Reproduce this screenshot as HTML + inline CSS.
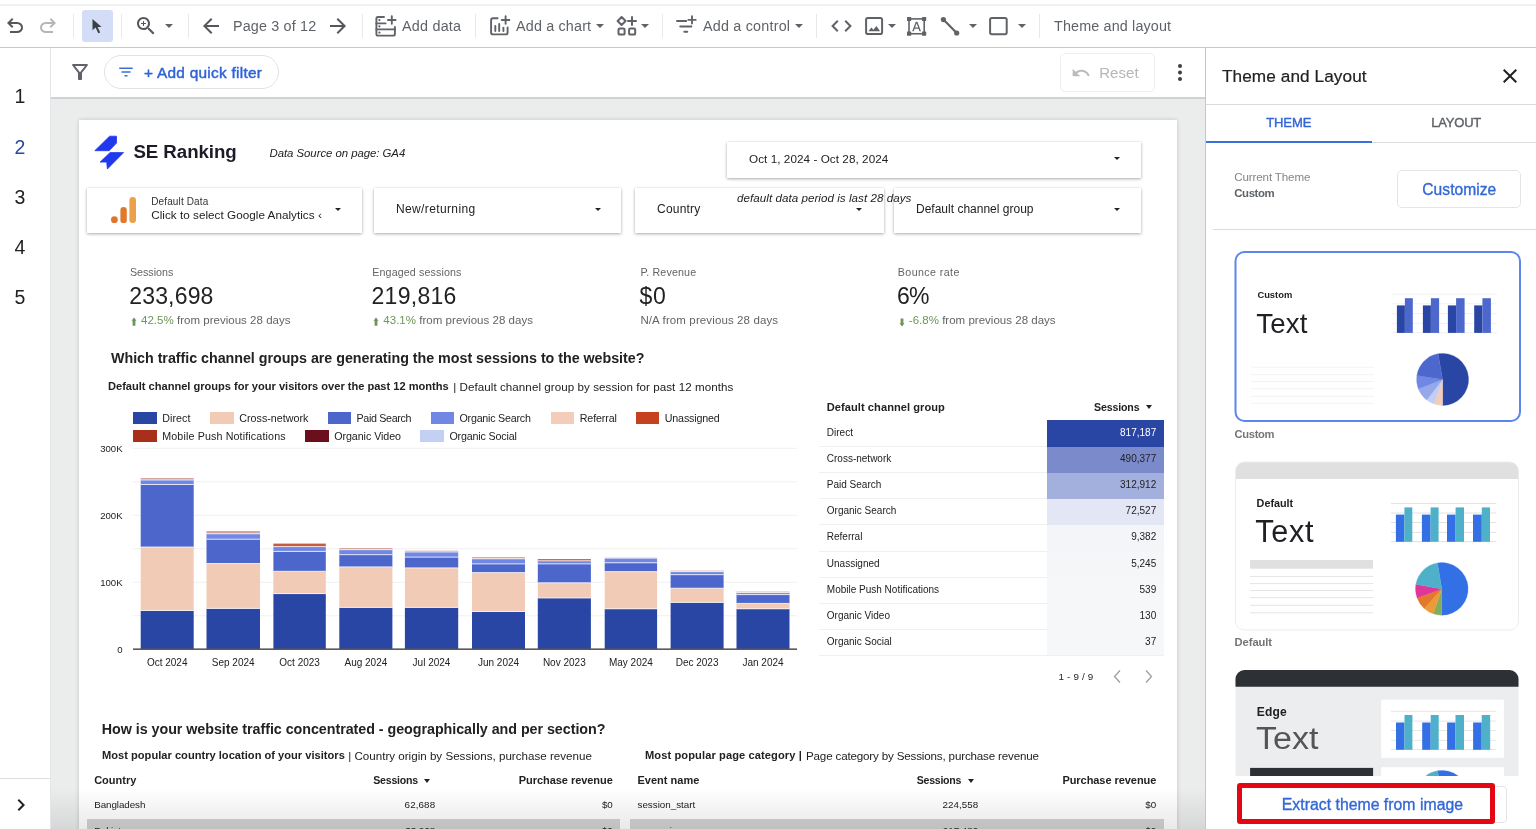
<!DOCTYPE html>
<html>
<head>
<meta charset="utf-8">
<title>Report</title>
<style>
html,body{margin:0;padding:0;}
body{width:1536px;height:829px;overflow:hidden;background:#fff;position:relative;font-family:"Liberation Sans",sans-serif;color:#202124;}
.abs{position:absolute;}
#pg,#tbc,#pnc,#fbc,#sidec{will-change:transform;}
.t{position:absolute;white-space:nowrap;line-height:1;}
/* toolbar */
#topline{left:0;top:4px;width:1536px;height:2px;background:#f0f2f1;}
#toolbar{left:0;top:6px;width:1536px;height:41px;background:#fff;border-bottom:1px solid #c6c9ce;}
.sep{position:absolute;top:14px;width:1px;height:24px;background:#e6e8eb;}
.tb{position:absolute;white-space:nowrap;line-height:1;font-size:14.5px;color:#5f6368;top:19px;}
.caret{position:absolute;width:0;height:0;border-left:4.2px solid transparent;border-right:4.2px solid transparent;border-top:4.4px solid #5f6368;}
/* sidebar */
#side{left:0;top:48px;width:50px;height:781px;background:#fff;border-right:1px solid #e3e5e8;}
.num{position:absolute;left:0;width:40px;text-align:center;font-size:19.5px;line-height:1;color:#202124;}
/* filter bar */
#fbar{left:51px;top:48px;width:1154px;height:49px;background:#fff;border-bottom:2px solid #cfd1d4;}
/* canvas */
#canvas{left:51px;top:99px;width:1154px;height:730px;background:#ebecec;overflow:hidden;}
#page{left:28px;top:21px;width:1098px;height:720px;background:#fff;box-shadow:0 0 4px rgba(0,0,0,.18);}
/* report text (page-relative coords handled by #pg wrapper using body coords) */
#pg{left:0;top:0;width:1205px;height:829px;overflow:hidden;pointer-events:none;}
.r{position:absolute;white-space:nowrap;line-height:1;color:#2b2b2b;}
.ctl{position:absolute;background:#fff;box-shadow:0 1px 3px rgba(0,0,0,.32),0 0 1px rgba(0,0,0,.12);}
.cc{position:absolute;width:0;height:0;border-left:3.5px solid transparent;border-right:3.5px solid transparent;border-top:3.5px solid #222;}
/* right panel */
#panel{left:1205px;top:48px;width:330px;height:781px;background:#fff;border-left:1px solid #c3c6cb;overflow:hidden;}
</style>
</head>
<body>
<div id="topline" class="abs"></div>
<div id="toolbar" class="abs"></div>
<div id="side" class="abs"></div>
<div id="fbar" class="abs"></div>
<div id="canvas" class="abs"><div id="page" class="abs"></div></div>
<div id="fbc" class="abs" style="left:0;top:0;width:1205px;height:98px;">
<svg class="abs" style="left:68px;top:60px" width="24" height="24" viewBox="0 0 24 24"><path fill="#5f6368" d="M7 6h10l-5.01 6.3L7 6zm-2.75-.39C6.27 8.2 10 13 10 13v6c0 .55.45 1 1 1h2c.55 0 1-.45 1-1v-6s3.72-4.8 5.74-7.39c.51-.66.04-1.61-.79-1.61H5.04c-.83 0-1.3.95-.79 1.61z"/></svg>
<div class="abs" style="left:104px;top:55px;width:173px;height:32px;border:1px solid #e0e2e6;border-radius:17px;"></div>
<svg class="abs" style="left:117px;top:63px" width="18" height="18" viewBox="0 0 24 24"><path fill="#3b6fe0" d="M10 18h4v-2h-4v2zM3 6v2h18V6H3zm3 7h12v-2H6v2z"/></svg>
<div class="t" id="t_aqf" style="left:144px;top:65.0px;font-size:15.4px;letter-spacing:0.271px;color:#2f63d8;-webkit-text-stroke:0.45px #2f63d8;">+ Add quick filter</div>
<div class="abs" style="left:1060px;top:53px;width:93px;height:37px;border:1px solid #eceef0;border-radius:5px;"></div>
<svg class="abs" style="left:1071px;top:63px" width="20" height="20" viewBox="0 0 24 24"><path fill="#b9bbbe" d="M12.5 8c-2.65 0-5.05.99-6.9 2.6L2 7v9h9l-3.62-3.62c1.39-1.16 3.16-1.88 5.12-1.88 3.54 0 6.55 2.31 7.6 5.5l2.37-.78C21.08 11.03 17.15 8 12.5 8z"/></svg>
<div class="t" id="t_reset" style="left:1099.2px;top:64.7px;font-size:15px;letter-spacing:0.043px;color:#b4b6b9;">Reset</div>
<svg class="abs" style="left:1168px;top:60px" width="24" height="24" viewBox="0 0 24 24"><g fill="#3c4043"><circle cx="12" cy="6" r="2"/><circle cx="12" cy="12.5" r="2"/><circle cx="12" cy="19" r="2"/></g></svg>
</div>
<div id="sidec" class="abs" style="left:0;top:0;width:50px;height:829px;">
<div class="num" id="n1" style="top:87px">1</div>
<div class="num" id="n2" style="top:137.6px;color:#2b46a8">2</div>
<div class="num" id="n3" style="top:187.6px">3</div>
<div class="num" id="n4" style="top:237.6px">4</div>
<div class="num" id="n5" style="top:287.6px">5</div>
<div class="abs" style="left:0;top:778px;width:50px;height:1px;background:#dcdee1"></div>
<svg class="abs" style="left:9px;top:793px" width="24" height="24" viewBox="0 0 24 24"><path fill="#202124" d="M10 6L8.59 7.41 13.17 12l-4.58 4.59L10 18l6-6z"/></svg>
</div>
<div id="pg" class="abs">
<svg class="abs" style="left:93px;top:135px" width="33" height="36" viewBox="0 0 33 36"><g fill="#2139ee" stroke="#2139ee" stroke-width="0.8" stroke-linejoin="round"><path d="M16.6,1.2 L23.5,1.2 L23.5,8.1 L16.2,15.7 L1.8,15.7 Z"/><path d="M17.1,17.6 L30.6,17.6 L14.4,34 L13.7,27.1 L7.1,27.1 Z"/></g></svg>
<div class="r" id="l_name" style="left:133.4px;top:143.2px;font-size:18.7px;font-weight:bold;color:#1c1c28;letter-spacing:-0.051px;">SE Ranking</div>
<div class="r" id="l_ds" style="left:269.5px;top:148.1px;font-size:11.4px;font-style:italic;color:#222;letter-spacing:-0.045px;">Data Source on page: GA4</div>
<div class="ctl" style="left:727px;top:142px;width:414px;height:36px"></div>
<div class="r" id="d_range" style="left:749px;top:152.7px;font-size:11.7px;color:#222;letter-spacing:0.062px;">Oct 1, 2024 - Oct 28, 2024</div>
<div class="cc" style="left:1114px;top:157px"></div>
<div class="ctl" style="left:87px;top:188px;width:275px;height:45px"></div>
<div class="ctl" style="left:374px;top:188px;width:247px;height:45px"></div>
<div class="ctl" style="left:635px;top:188px;width:249px;height:45px"></div>
<div class="ctl" style="left:894px;top:188px;width:247px;height:45px"></div>
<div class="r" id="d_note" style="left:737px;top:191.8px;font-size:11.6px;font-style:italic;color:#222;letter-spacing:0.048px;">default data period is last 28 days</div>
<svg class="abs" style="left:110px;top:196px" width="27" height="28" viewBox="110 196 27 28"><circle cx="114.4" cy="219.7" r="3.4" fill="#e0752a"/><rect x="120.4" y="206.9" width="6.4" height="16.2" rx="3.2" fill="#e0792c"/><rect x="129.4" y="196.9" width="6.6" height="26.2" rx="3.3" fill="#eca04a"/></svg>
<div class="r" id="c_dd" style="left:151.2px;top:197.1px;font-size:10px;color:#333;letter-spacing:0.134px;">Default Data</div>
<div class="r" id="c_click" style="left:151.2px;top:209.2px;font-size:11.7px;color:#222;letter-spacing:0.032px;">Click to select Google Analytics &#8249;</div>
<div class="cc" style="left:335px;top:208px"></div>
<div class="r" id="c_new" style="left:396px;top:203.1px;font-size:12px;color:#222;letter-spacing:0.369px;">New/returning</div>
<div class="cc" style="left:595px;top:208px"></div>
<div class="r" id="c_country" style="left:657px;top:203.1px;font-size:12px;color:#222;letter-spacing:0.212px;">Country</div>
<div class="cc" style="left:856px;top:208px"></div>
<div class="r" id="c_dcg" style="left:916px;top:203.1px;font-size:12px;color:#222;letter-spacing:0.004px;">Default channel group</div>
<div class="cc" style="left:1114px;top:208px"></div>
<div class="r" id="s0_l" style="left:130px;top:266.8px;font-size:10.7px;color:#646464;letter-spacing:-0.015px;">Sessions</div>
<div class="r" id="s0_v" style="left:129.2px;top:285.0px;font-size:23px;color:#222;letter-spacing:0.180px;">233,698</div>
<svg class="abs" style="left:131px;top:317.3px" width="6" height="9" viewBox="0 0 6 9"><path d="M3,0.6 L5.5,3.8 L4.4,3.8 L4.4,8.7 L1.6,8.7 L1.6,3.8 L0.5,3.8 Z" fill="#6b9657"/></svg>
<div class="r" id="s0_d" style="left:141px;top:314.8px;font-size:11.5px;color:#646464;letter-spacing:0.021px;"><span style="color:#6b9657">42.5%</span> from previous 28 days</div>
<div class="r" id="s1_l" style="left:372.3px;top:266.8px;font-size:10.7px;color:#646464;letter-spacing:0.116px;">Engaged sessions</div>
<div class="r" id="s1_v" style="left:371.5px;top:285.0px;font-size:23px;color:#222;letter-spacing:0.280px;">219,816</div>
<svg class="abs" style="left:373.3px;top:317.3px" width="6" height="9" viewBox="0 0 6 9"><path d="M3,0.6 L5.5,3.8 L4.4,3.8 L4.4,8.7 L1.6,8.7 L1.6,3.8 L0.5,3.8 Z" fill="#6b9657"/></svg>
<div class="r" id="s1_d" style="left:383.3px;top:314.8px;font-size:11.5px;color:#646464;letter-spacing:0.028px;"><span style="color:#6b9657">43.1%</span> from previous 28 days</div>
<div class="r" id="s2_l" style="left:640.4px;top:266.8px;font-size:10.7px;color:#646464;letter-spacing:0.136px;">P. Revenue</div>
<div class="r" id="s2_v" style="left:639.6px;top:285.0px;font-size:23px;color:#222;letter-spacing:0.558px;">$0</div>
<div class="r" id="s2_d" style="left:640.4px;top:314.8px;font-size:11.5px;color:#646464;letter-spacing:0.117px;">N/A from previous 28 days</div>
<div class="r" id="s3_l" style="left:897.8px;top:266.8px;font-size:10.7px;color:#646464;letter-spacing:0.400px;">Bounce rate</div>
<div class="r" id="s3_v" style="left:897.0px;top:285.0px;font-size:23px;color:#222;letter-spacing:-0.721px;">6%</div>
<svg class="abs" style="left:898.8px;top:317.5px" width="6" height="9" viewBox="0 0 6 9"><path d="M3,8.5 L5.5,5.3 L4.4,5.3 L4.4,0.4 L1.6,0.4 L1.6,5.3 L0.5,5.3 Z" fill="#6b9657"/></svg>
<div class="r" id="s3_d" style="left:908.8px;top:314.8px;font-size:11.5px;color:#646464;letter-spacing:0.016px;"><span style="color:#6b9657">-6.8%</span> from previous 28 days</div>
<div class="r" id="h1" style="left:111px;top:351.2px;font-size:14.3px;font-weight:bold;color:#222;letter-spacing:-0.037px;">Which traffic channel groups are generating the most sessions to the website?</div>
<div class="r" id="h1s" style="left:108px;top:381.3px;font-size:11.1px;font-weight:bold;color:#222;letter-spacing:-0.014px;">Default channel groups for your visitors over the past 12 months</div>
<div class="r" id="h1s2" style="left:453.2px;top:381.1px;font-size:11.6px;color:#222;letter-spacing:0.061px;">| Default channel group by session for past 12 months</div>
<div class="abs" style="left:133.2px;top:412.3px;width:23.7px;height:11.8px;background:#2a46a4"></div>
<div class="r" id="lg0" style="left:162.2px;top:413.3px;font-size:10.7px;color:#222;letter-spacing:0.076px;">Direct</div>
<div class="abs" style="left:210.3px;top:412.3px;width:23.7px;height:11.8px;background:#f1cbb5"></div>
<div class="r" id="lg1" style="left:239.3px;top:413.3px;font-size:10.7px;color:#222;letter-spacing:0.018px;">Cross-network</div>
<div class="abs" style="left:327.5px;top:412.3px;width:23.7px;height:11.8px;background:#4c66cb"></div>
<div class="r" id="lg2" style="left:356.5px;top:413.3px;font-size:10.7px;color:#222;letter-spacing:-0.318px;">Paid Search</div>
<div class="abs" style="left:430.5px;top:412.3px;width:23.7px;height:11.8px;background:#7088e4"></div>
<div class="r" id="lg3" style="left:459.5px;top:413.3px;font-size:10.7px;color:#222;letter-spacing:-0.225px;">Organic Search</div>
<div class="abs" style="left:550.7px;top:412.3px;width:23.7px;height:11.8px;background:#f3cdb9"></div>
<div class="r" id="lg4" style="left:579.7px;top:413.3px;font-size:10.7px;color:#222;letter-spacing:-0.107px;">Referral</div>
<div class="abs" style="left:635.8px;top:412.3px;width:23.7px;height:11.8px;background:#c5411f"></div>
<div class="r" id="lg5" style="left:664.8px;top:413.3px;font-size:10.7px;color:#222;letter-spacing:-0.171px;">Unassigned</div>
<div class="abs" style="left:133.2px;top:430.2px;width:23.7px;height:11.8px;background:#a8301a"></div>
<div class="r" id="lg6" style="left:162.2px;top:431.2px;font-size:10.7px;color:#222;letter-spacing:0.142px;">Mobile Push Notifications</div>
<div class="abs" style="left:305.2px;top:430.2px;width:23.7px;height:11.8px;background:#6b0f1c"></div>
<div class="r" id="lg7" style="left:334.2px;top:431.2px;font-size:10.7px;color:#222;letter-spacing:-0.055px;">Organic Video</div>
<div class="abs" style="left:420.4px;top:430.2px;width:23.7px;height:11.8px;background:#c3cff3"></div>
<div class="r" id="lg8" style="left:449.4px;top:431.2px;font-size:10.7px;color:#222;letter-spacing:-0.149px;">Organic Social</div>
<svg class="abs" style="left:90px;top:440px" width="720" height="215" viewBox="90 440 720 215"><rect x="133" y="447.8" width="664" height="1" fill="#f0f0f0"/><rect x="133" y="481.3" width="664" height="1" fill="#f0f0f0"/><rect x="133" y="514.8" width="664" height="1" fill="#f0f0f0"/><rect x="133" y="548.3" width="664" height="1" fill="#f0f0f0"/><rect x="133" y="581.8" width="664" height="1" fill="#f0f0f0"/><rect x="133" y="615.3" width="664" height="1" fill="#f0f0f0"/><rect x="140.7" y="610.5" width="53.0" height="38.3" fill="#2a46a4"/><rect x="140.7" y="547.0" width="53.0" height="63.5" fill="#f1cbb5"/><rect x="140.7" y="610.0" width="53.0" height="1" fill="#fff" fill-opacity="0.75"/><rect x="140.7" y="484.5" width="53.0" height="62.5" fill="#4c66cb"/><rect x="140.7" y="546.5" width="53.0" height="1" fill="#fff" fill-opacity="0.75"/><rect x="140.7" y="480.0" width="53.0" height="4.5" fill="#7088e4"/><rect x="140.7" y="484.0" width="53.0" height="1" fill="#fff" fill-opacity="0.75"/><rect x="140.7" y="478.0" width="53.0" height="2.0" fill="#d6a59c"/><rect x="140.7" y="479.5" width="53.0" height="1" fill="#fff" fill-opacity="0.75"/><rect x="206.5" y="608.4" width="53.5" height="40.4" fill="#2a46a4"/><rect x="206.5" y="563.5" width="53.5" height="44.9" fill="#f1cbb5"/><rect x="206.5" y="607.9" width="53.5" height="1" fill="#fff" fill-opacity="0.75"/><rect x="206.5" y="539.2" width="53.5" height="24.3" fill="#4c66cb"/><rect x="206.5" y="563.0" width="53.5" height="1" fill="#fff" fill-opacity="0.75"/><rect x="206.5" y="533.8" width="53.5" height="5.4" fill="#7088e4"/><rect x="206.5" y="538.7" width="53.5" height="1" fill="#fff" fill-opacity="0.75"/><rect x="206.5" y="531.0" width="53.5" height="2.8" fill="#d6a59c"/><rect x="206.5" y="533.3" width="53.5" height="1" fill="#fff" fill-opacity="0.75"/><rect x="273.4" y="593.6" width="52.4" height="55.2" fill="#2a46a4"/><rect x="273.4" y="571.3" width="52.4" height="22.3" fill="#f1cbb5"/><rect x="273.4" y="593.1" width="52.4" height="1" fill="#fff" fill-opacity="0.75"/><rect x="273.4" y="551.4" width="52.4" height="19.9" fill="#4c66cb"/><rect x="273.4" y="570.8" width="52.4" height="1" fill="#fff" fill-opacity="0.75"/><rect x="273.4" y="546.6" width="52.4" height="4.8" fill="#7088e4"/><rect x="273.4" y="550.9" width="52.4" height="1" fill="#fff" fill-opacity="0.75"/><rect x="273.4" y="543.6" width="52.4" height="3.0" fill="#c75a42"/><rect x="273.4" y="546.1" width="52.4" height="1" fill="#fff" fill-opacity="0.75"/><rect x="339.3" y="607.4" width="53.1" height="41.4" fill="#2a46a4"/><rect x="339.3" y="566.9" width="53.1" height="40.5" fill="#f1cbb5"/><rect x="339.3" y="606.9" width="53.1" height="1" fill="#fff" fill-opacity="0.75"/><rect x="339.3" y="554.7" width="53.1" height="12.2" fill="#4c66cb"/><rect x="339.3" y="566.4" width="53.1" height="1" fill="#fff" fill-opacity="0.75"/><rect x="339.3" y="549.7" width="53.1" height="5.0" fill="#7088e4"/><rect x="339.3" y="554.2" width="53.1" height="1" fill="#fff" fill-opacity="0.75"/><rect x="339.3" y="548.0" width="53.1" height="1.7" fill="#d6a59c"/><rect x="339.3" y="549.2" width="53.1" height="1" fill="#fff" fill-opacity="0.75"/><rect x="404.9" y="607.4" width="53.3" height="41.4" fill="#2a46a4"/><rect x="404.9" y="567.9" width="53.3" height="39.5" fill="#f1cbb5"/><rect x="404.9" y="606.9" width="53.3" height="1" fill="#fff" fill-opacity="0.75"/><rect x="404.9" y="557.1" width="53.3" height="10.8" fill="#4c66cb"/><rect x="404.9" y="567.4" width="53.3" height="1" fill="#fff" fill-opacity="0.75"/><rect x="404.9" y="552.0" width="53.3" height="5.1" fill="#7088e4"/><rect x="404.9" y="556.6" width="53.3" height="1" fill="#fff" fill-opacity="0.75"/><rect x="404.9" y="550.7" width="53.3" height="1.3" fill="#d6a59c"/><rect x="404.9" y="551.5" width="53.3" height="1" fill="#fff" fill-opacity="0.75"/><rect x="472" y="611.5" width="53.0" height="37.3" fill="#2a46a4"/><rect x="472" y="572.6" width="53.0" height="38.9" fill="#f1cbb5"/><rect x="472" y="611.0" width="53.0" height="1" fill="#fff" fill-opacity="0.75"/><rect x="472" y="563.9" width="53.0" height="8.7" fill="#4c66cb"/><rect x="472" y="572.1" width="53.0" height="1" fill="#fff" fill-opacity="0.75"/><rect x="472" y="558.8" width="53.0" height="5.1" fill="#7088e4"/><rect x="472" y="563.4" width="53.0" height="1" fill="#fff" fill-opacity="0.75"/><rect x="472" y="557.1" width="53.0" height="1.7" fill="#d6a59c"/><rect x="472" y="558.3" width="53.0" height="1" fill="#fff" fill-opacity="0.75"/><rect x="537.8" y="598.0" width="53.1" height="50.8" fill="#2a46a4"/><rect x="537.8" y="582.8" width="53.1" height="15.2" fill="#f1cbb5"/><rect x="537.8" y="597.5" width="53.1" height="1" fill="#fff" fill-opacity="0.75"/><rect x="537.8" y="563.9" width="53.1" height="18.9" fill="#4c66cb"/><rect x="537.8" y="582.3" width="53.1" height="1" fill="#fff" fill-opacity="0.75"/><rect x="537.8" y="560.8" width="53.1" height="3.1" fill="#7088e4"/><rect x="537.8" y="563.4" width="53.1" height="1" fill="#fff" fill-opacity="0.75"/><rect x="537.8" y="559.1" width="53.1" height="1.7" fill="#c75a42"/><rect x="537.8" y="560.3" width="53.1" height="1" fill="#fff" fill-opacity="0.75"/><rect x="604.7" y="608.8" width="52.4" height="40.0" fill="#2a46a4"/><rect x="604.7" y="571.6" width="52.4" height="37.2" fill="#f1cbb5"/><rect x="604.7" y="608.3" width="52.4" height="1" fill="#fff" fill-opacity="0.75"/><rect x="604.7" y="562.8" width="52.4" height="8.8" fill="#4c66cb"/><rect x="604.7" y="571.1" width="52.4" height="1" fill="#fff" fill-opacity="0.75"/><rect x="604.7" y="558.1" width="52.4" height="4.7" fill="#7088e4"/><rect x="604.7" y="562.3" width="52.4" height="1" fill="#fff" fill-opacity="0.75"/><rect x="604.7" y="557.6" width="52.4" height="0.5" fill="#d6a59c"/><rect x="604.7" y="557.6" width="52.4" height="1" fill="#fff" fill-opacity="0.75"/><rect x="670.6" y="602.4" width="53.0" height="46.4" fill="#2a46a4"/><rect x="670.6" y="588.2" width="53.0" height="14.2" fill="#f1cbb5"/><rect x="670.6" y="601.9" width="53.0" height="1" fill="#fff" fill-opacity="0.75"/><rect x="670.6" y="574.7" width="53.0" height="13.5" fill="#4c66cb"/><rect x="670.6" y="587.7" width="53.0" height="1" fill="#fff" fill-opacity="0.75"/><rect x="670.6" y="571.6" width="53.0" height="3.1" fill="#7088e4"/><rect x="670.6" y="574.2" width="53.0" height="1" fill="#fff" fill-opacity="0.75"/><rect x="670.6" y="570.6" width="53.0" height="1.0" fill="#d6a59c"/><rect x="670.6" y="571.1" width="53.0" height="1" fill="#fff" fill-opacity="0.75"/><rect x="736.5" y="608.8" width="53.0" height="40.0" fill="#2a46a4"/><rect x="736.5" y="603.4" width="53.0" height="5.4" fill="#f1cbb5"/><rect x="736.5" y="608.3" width="53.0" height="1" fill="#fff" fill-opacity="0.75"/><rect x="736.5" y="594.6" width="53.0" height="8.8" fill="#4c66cb"/><rect x="736.5" y="602.9" width="53.0" height="1" fill="#fff" fill-opacity="0.75"/><rect x="736.5" y="592.6" width="53.0" height="2.0" fill="#7088e4"/><rect x="736.5" y="594.1" width="53.0" height="1" fill="#fff" fill-opacity="0.75"/><rect x="736.5" y="591.6" width="53.0" height="1.0" fill="#d6a59c"/><rect x="736.5" y="592.1" width="53.0" height="1" fill="#fff" fill-opacity="0.75"/><rect x="133" y="648.5" width="664" height="1.3" fill="#333"/></svg>
<div class="r" id="y300K" style="right:1082.4px;top:443.6px;font-size:9.6px;color:#222;">300K</div>
<div class="r" id="y200K" style="right:1082.4px;top:510.6px;font-size:9.6px;color:#222;">200K</div>
<div class="r" id="y100K" style="right:1082.4px;top:577.6px;font-size:9.6px;color:#222;">100K</div>
<div class="r" id="y0" style="right:1082.4px;top:644.6px;font-size:9.6px;color:#222;">0</div>
<div class="r" id="x0" style="left:127.2px;width:80px;text-align:center;top:657.5px;font-size:10px;color:#222;">Oct 2024</div>
<div class="r" id="x1" style="left:193.2px;width:80px;text-align:center;top:657.5px;font-size:10px;color:#222;">Sep 2024</div>
<div class="r" id="x2" style="left:259.6px;width:80px;text-align:center;top:657.5px;font-size:10px;color:#222;">Oct 2023</div>
<div class="r" id="x3" style="left:325.9px;width:80px;text-align:center;top:657.5px;font-size:10px;color:#222;">Aug 2024</div>
<div class="r" id="x4" style="left:391.5px;width:80px;text-align:center;top:657.5px;font-size:10px;color:#222;">Jul 2024</div>
<div class="r" id="x5" style="left:458.5px;width:80px;text-align:center;top:657.5px;font-size:10px;color:#222;">Jun 2024</div>
<div class="r" id="x6" style="left:524.3px;width:80px;text-align:center;top:657.5px;font-size:10px;color:#222;">Nov 2023</div>
<div class="r" id="x7" style="left:590.9px;width:80px;text-align:center;top:657.5px;font-size:10px;color:#222;">May 2024</div>
<div class="r" id="x8" style="left:657.1px;width:80px;text-align:center;top:657.5px;font-size:10px;color:#222;">Dec 2023</div>
<div class="r" id="x9" style="left:723.0px;width:80px;text-align:center;top:657.5px;font-size:10px;color:#222;">Jan 2024</div>
<div class="r" id="th1" style="left:826.8px;top:402.0px;font-size:11.1px;font-weight:bold;color:#222;letter-spacing:0.049px;">Default channel group</div>
<div class="r" id="th2" style="left:1094px;top:402.3px;font-size:10.6px;font-weight:bold;color:#222;letter-spacing:-0.143px;">Sessions</div>
<div class="cc" style="left:1146px;top:405.3px;border-left-width:3px;border-right-width:3px;border-top-width:4px"></div>
<div class="abs" style="left:819px;top:446.2px;width:345px;height:1px;background:#f0f0f0"></div>
<div class="abs" style="left:1047.4px;top:420.0px;width:116.4px;height:26.93px;background:#2a46a4"></div>
<div class="r" id="tr0a" style="left:826.8px;top:427.9px;font-size:10px;color:#222;">Direct</div>
<div class="r" id="tr0b" style="right:48.799999999999955px;top:427.9px;font-size:10px;color:#fff;">817,187</div>
<div class="abs" style="left:819px;top:472.3px;width:345px;height:1px;background:#f0f0f0"></div>
<div class="abs" style="left:1047.4px;top:446.8px;width:116.4px;height:26.23px;background:#7a8aca"></div>
<div class="r" id="tr1a" style="left:826.8px;top:453.9px;font-size:10px;color:#222;">Cross-network</div>
<div class="r" id="tr1b" style="right:48.799999999999955px;top:453.9px;font-size:10px;color:#222;">490,377</div>
<div class="abs" style="left:819px;top:498.3px;width:345px;height:1px;background:#f0f0f0"></div>
<div class="abs" style="left:1047.4px;top:472.9px;width:116.4px;height:26.23px;background:#a3afdc"></div>
<div class="r" id="tr2a" style="left:826.8px;top:479.9px;font-size:10px;color:#222;">Paid Search</div>
<div class="r" id="tr2b" style="right:48.799999999999955px;top:479.9px;font-size:10px;color:#222;">312,912</div>
<div class="abs" style="left:819px;top:524.4px;width:345px;height:1px;background:#f0f0f0"></div>
<div class="abs" style="left:1047.4px;top:498.9px;width:116.4px;height:26.23px;background:#e3e7f5"></div>
<div class="r" id="tr3a" style="left:826.8px;top:505.9px;font-size:10px;color:#222;">Organic Search</div>
<div class="r" id="tr3b" style="right:48.799999999999955px;top:505.9px;font-size:10px;color:#222;">72,527</div>
<div class="abs" style="left:819px;top:550.5px;width:345px;height:1px;background:#f0f0f0"></div>
<div class="abs" style="left:1047.4px;top:525.0px;width:116.4px;height:26.23px;background:#f4f5f8"></div>
<div class="r" id="tr4a" style="left:826.8px;top:532.4px;font-size:10px;color:#222;">Referral</div>
<div class="r" id="tr4b" style="right:48.799999999999955px;top:532.4px;font-size:10px;color:#222;">9,382</div>
<div class="abs" style="left:819px;top:576.6px;width:345px;height:1px;background:#f0f0f0"></div>
<div class="abs" style="left:1047.4px;top:551.1px;width:116.4px;height:26.23px;background:#f5f6f8"></div>
<div class="r" id="tr5a" style="left:826.8px;top:558.9px;font-size:10px;color:#222;">Unassigned</div>
<div class="r" id="tr5b" style="right:48.799999999999955px;top:558.9px;font-size:10px;color:#222;">5,245</div>
<div class="abs" style="left:819px;top:602.7px;width:345px;height:1px;background:#f0f0f0"></div>
<div class="abs" style="left:1047.4px;top:577.2px;width:116.4px;height:26.23px;background:#f6f7f9"></div>
<div class="r" id="tr6a" style="left:826.8px;top:584.9px;font-size:10px;color:#222;">Mobile Push Notifications</div>
<div class="r" id="tr6b" style="right:48.799999999999955px;top:584.9px;font-size:10px;color:#222;">539</div>
<div class="abs" style="left:819px;top:628.7px;width:345px;height:1px;background:#f0f0f0"></div>
<div class="abs" style="left:1047.4px;top:603.3px;width:116.4px;height:26.23px;background:#f6f7f9"></div>
<div class="r" id="tr7a" style="left:826.8px;top:610.9px;font-size:10px;color:#222;">Organic Video</div>
<div class="r" id="tr7b" style="right:48.799999999999955px;top:610.9px;font-size:10px;color:#222;">130</div>
<div class="abs" style="left:819px;top:654.8px;width:345px;height:1px;background:#f0f0f0"></div>
<div class="abs" style="left:1047.4px;top:629.3px;width:116.4px;height:25.58px;background:#f6f7f9"></div>
<div class="r" id="tr8a" style="left:826.8px;top:636.9px;font-size:10px;color:#222;">Organic Social</div>
<div class="r" id="tr8b" style="right:48.799999999999955px;top:636.9px;font-size:10px;color:#222;">37</div>
<div class="r" id="pg1" style="left:1058.6px;top:671.6px;font-size:9.8px;color:#222;letter-spacing:0.164px;">1 - 9 / 9</div>
<svg class="abs" style="left:1111px;top:669px" width="12" height="15" viewBox="0 0 12 15"><path d="M9,1.5 L3.5,7.5 L9,13.5" fill="none" stroke="#9e9e9e" stroke-width="1.3"/></svg>
<svg class="abs" style="left:1143px;top:669px" width="12" height="15" viewBox="0 0 12 15"><path d="M3,1.5 L8.5,7.5 L3,13.5" fill="none" stroke="#9e9e9e" stroke-width="1.3"/></svg>
<div class="r" id="h2" style="left:101.8px;top:721.7px;font-size:14.3px;font-weight:bold;color:#222;letter-spacing:-0.044px;">How is your website traffic concentrated - geographically and per section?</div>
<div class="r" id="h2s" style="left:102px;top:750.3px;font-size:11.1px;font-weight:bold;color:#222;letter-spacing:0.014px;">Most popular country location of your visitors</div>
<div class="r" id="h2s2" style="left:348.2px;top:750.1px;font-size:11.6px;color:#222;letter-spacing:0.006px;">| Country origin by Sessions, purchase revenue</div>
<div class="r" id="h3s" style="left:645px;top:750.3px;font-size:11.1px;font-weight:bold;color:#222;letter-spacing:0.099px;">Most popular page category |</div>
<div class="r" id="h3s2" style="left:806px;top:750.1px;font-size:11.6px;color:#222;letter-spacing:-0.160px;">Page category by Sessions, purchase revenue</div>
<div class="r" id="t1h1" style="left:94.2px;top:775.0px;font-size:11px;font-weight:bold;color:#222;letter-spacing:-0.009px;">Country</div>
<div class="r" id="t1h2" style="left:373.3px;top:775.2px;font-size:10.6px;font-weight:bold;color:#222;letter-spacing:-0.256px;">Sessions</div>
<div class="cc" style="left:424px;top:779px;border-left-width:3px;border-right-width:3px;border-top-width:4px"></div>
<div class="r" id="t1h3" style="left:518.7px;top:775.0px;font-size:11px;font-weight:bold;color:#222;letter-spacing:-0.042px;">Purchase revenue</div>
<div class="r" id="t1r1" style="left:94.2px;top:799.7px;font-size:9.8px;color:#222;letter-spacing:-0.067px;">Bangladesh</div>
<div class="r" id="t1r2" style="left:404.6px;top:799.7px;font-size:9.8px;color:#222;letter-spacing:0.104px;">62,688</div>
<div class="r" id="t1r3" style="left:602px;top:799.7px;font-size:9.8px;color:#222;letter-spacing:-0.100px;">$0</div>
<div class="r" id="t2h1" style="left:637.5px;top:775.0px;font-size:11px;font-weight:bold;color:#222;letter-spacing:0.005px;">Event name</div>
<div class="r" id="t2h2" style="left:916.7px;top:775.2px;font-size:10.6px;font-weight:bold;color:#222;letter-spacing:-0.256px;">Sessions</div>
<div class="cc" style="left:968px;top:779px;border-left-width:3px;border-right-width:3px;border-top-width:4px"></div>
<div class="r" id="t2h3" style="left:1062.4px;top:775.0px;font-size:11px;font-weight:bold;color:#222;letter-spacing:-0.055px;">Purchase revenue</div>
<div class="r" id="t2r1" style="left:637.5px;top:799.7px;font-size:9.8px;color:#222;letter-spacing:0.005px;">session_start</div>
<div class="r" id="t2r2" style="left:942.5px;top:799.7px;font-size:9.8px;color:#222;letter-spacing:0.039px;">224,558</div>
<div class="r" id="t2r3" style="left:1145.3px;top:799.7px;font-size:9.8px;color:#222;letter-spacing:-0.000px;">$0</div>
<div class="abs" style="left:86.5px;top:819px;width:533.5px;height:10px;background:#d3d3d3"></div>
<div class="abs" style="left:630px;top:819px;width:533.5px;height:10px;background:#d3d3d3"></div>
<div class="r" id="t1p1" style="left:94.2px;top:825.6px;font-size:9.8px;color:#222;">Pakistan</div>
<div class="r" id="t1p2" style="right:769.8px;top:825.6px;font-size:9.8px;color:#222;">33,268</div>
<div class="r" id="t1p3" style="right:592.3px;top:825.6px;font-size:9.8px;color:#222;">$0</div>
<div class="r" id="t2p1" style="left:637.5px;top:825.6px;font-size:9.8px;color:#222;">page_view</div>
<div class="r" id="t2p2" style="right:226.79999999999995px;top:825.6px;font-size:9.8px;color:#222;">217,480</div>
<div class="r" id="t2p3" style="right:48.799999999999955px;top:825.6px;font-size:9.8px;color:#222;">$0</div>
</div><!--pgend-->
<div id="tbc" class="abs" style="left:0;top:0;width:1536px;height:48px;">
<svg class="abs" style="left:3px;top:14px" width="24" height="24" viewBox="0 0 24 24"><path fill="#54575b" d="M7 19v-2h7.1q1.575 0 2.738-1T18 13.5 16.838 11 14.1 10H7.8l2.6 2.6L9 14 4 9l5-5 1.4 1.4L7.8 8h6.3q2.425 0 4.163 1.575T20 13.5t-1.737 3.925T14.1 19z"/></svg>
<svg class="abs" style="left:36px;top:14px" width="24" height="24" viewBox="0 0 24 24"><path fill="#b4b6b9" d="M16.2 10H9.9q-1.575 0-2.738 1T6 13.5 7.163 16 9.9 17H17v2H9.9q-2.425 0-4.163-1.575T4 13.5t1.737-3.925T9.9 8h6.3l-2.6-2.6L15 4l5 5-5 5-1.4-1.4z"/></svg>
<div class="sep" style="left:73px"></div>
<div class="abs" style="left:82px;top:10px;width:31px;height:32px;background:#d3ddf7;border-radius:3px;"></div>
<svg class="abs" style="left:91px;top:18px" width="14" height="17" viewBox="0 0 14 17"><path fill="#3c4043" d="M1.5 1 L1.5 12.2 L4.6 9.6 L7.3 15.3 L9.2 14.4 L6.6 8.9 L10.6 8.9 Z"/></svg>
<div class="sep" style="left:121px"></div>
<svg class="abs" style="left:134px;top:14px" width="24" height="24" viewBox="0 0 24 24"><path fill="#54575b" d="M15.5 14h-.79l-.28-.27C15.41 12.59 16 11.11 16 9.5 16 5.91 13.09 3 9.5 3S3 5.91 3 9.5 5.91 16 9.5 16c1.61 0 3.09-.59 4.23-1.57l.27.28v.79l5 4.99L20.49 19l-4.99-5zm-6 0C7.01 14 5 11.99 5 9.5S7.01 5 9.5 5 14 7.01 14 9.5 11.99 14 9.5 14zM12 10h-2v2H9v-2H7V9h2V7h1v2h2v1z"/></svg>
<div class="caret" style="left:165px;top:24px"></div>
<div class="sep" style="left:188px"></div>
<svg class="abs" style="left:199px;top:14px" width="24" height="24" viewBox="0 0 24 24"><path fill="#54575b" d="M20 11H7.83l5.59-5.59L12 4l-8 8 8 8 1.41-1.41L7.83 13H20v-2z"/></svg>
<div class="tb" id="t_page" style="left:233px;top:19.2px;font-size:14.35px;letter-spacing:0.160px;">Page 3 of 12</div>
<svg class="abs" style="left:326px;top:14px" width="24" height="24" viewBox="0 0 24 24"><path fill="#54575b" d="M12 4l-1.41 1.41L16.17 11H4v2h12.17l-5.58 5.59L12 20l8-8z"/></svg>
<div class="sep" style="left:362px"></div>
<svg class="abs" style="left:373px;top:14px" width="26" height="24" viewBox="0 0 26 24"><g fill="none" stroke="#5f6368" stroke-width="1.9" stroke-linecap="round" stroke-linejoin="round"><path d="M11,3 H5 Q3.4,3 3.4,4.6 V20 Q3.4,21.6 5,21.6 H20.3 Q21.9,21.6 21.9,20 V13"/><path d="M3.4,9.4 H12.6 M3.4,15.4 H21.9"/><path d="M18.8,2.2 V9.8 M15,6 H22.6"/></g><g fill="#5f6368"><circle cx="6.4" cy="6.1" r="1.15"/><circle cx="6.4" cy="12.3" r="1.15"/><circle cx="6.4" cy="18.6" r="1.15"/></g></svg>
<div class="tb" id="t_adddata" style="left:402px;top:19.2px;font-size:14.35px;letter-spacing:0.231px;">Add data</div>
<div class="sep" style="left:475px"></div>
<svg class="abs" style="left:487px;top:13px" width="26" height="26" viewBox="0 0 26 26"><g fill="none" stroke="#5f6368" stroke-width="1.9" stroke-linecap="round" stroke-linejoin="round"><path d="M10.6,5.2 H6 Q4.1,5.2 4.1,7.1 V19.5 Q4.1,21.4 6,21.4 H18.7 Q20.6,21.4 20.6,19.5 V14.5"/><path d="M18.6,3.2 V10.8 M14.8,7 H22.4"/><path d="M8.3,13 V18 M12.2,11 V18 M16.4,14.6 V18"/></g></svg>
<div class="tb" id="t_addchart" style="left:516px;top:19.2px;font-size:14.35px;letter-spacing:0.174px;">Add a chart</div>
<div class="caret" style="left:596px;top:24px"></div>
<svg class="abs" style="left:615px;top:13px" width="26" height="26" viewBox="0 0 26 26"><g fill="none" stroke="#5f6368" stroke-width="2" stroke-linejoin="round"><path d="M6.6,4 L10.6,8 L6.6,12 L2.6,8 Z"/><rect x="3.5" y="15.6" width="6.1" height="6" rx="1.2"/><rect x="14.1" y="15.6" width="6.1" height="6" rx="1.2"/><path d="M17,4 V12 M13,8 H21" stroke-linecap="round"/></g></svg>
<div class="caret" style="left:641px;top:24px"></div>
<div class="sep" style="left:662px"></div>
<svg class="abs" style="left:674px;top:13px" width="26" height="26" viewBox="0 0 26 26"><g fill="none" stroke="#5f6368" stroke-width="1.9" stroke-linecap="round"><path d="M3,8 H12.2 M6.2,13.5 H17.4 M10.3,18.75 H13.3"/><path d="M18,3.2 V10.6 M14.3,6.9 H21.7"/></g></svg>
<div class="tb" id="t_addctl" style="left:703px;top:19.2px;font-size:14.35px;letter-spacing:0.211px;">Add a control</div>
<div class="caret" style="left:795px;top:24px"></div>
<div class="sep" style="left:816px"></div>
<svg class="abs" style="left:830px;top:14px" width="24" height="24" viewBox="0 0 24 24"><g fill="none" stroke="#5f6368" stroke-width="2"><path d="M7.8,6.8 L2.6,12 L7.8,17.2"/><path d="M15.2,6.8 L20.4,12 L15.2,17.2"/></g></svg>
<svg class="abs" style="left:862px;top:14px" width="24" height="24" viewBox="0 0 24 24"><rect x="4.1" y="3.9" width="16" height="16.2" rx="1.8" fill="none" stroke="#5f6368" stroke-width="2"/><path d="M6.5,17.2 L9.3,13.4 L11.4,15.8 L14.4,12 L18.1,17.2 Z" fill="#5f6368"/></svg>
<div class="caret" style="left:888px;top:24px"></div>
<svg class="abs" style="left:905px;top:14px" width="24" height="24" viewBox="0 0 24 24"><rect x="4" y="4.9" width="15.2" height="14.85" fill="none" stroke="#5f6368" stroke-width="1.6"/><g fill="#5f6368"><rect x="2" y="2.9" width="4.2" height="4.2" rx="0.6"/><rect x="17" y="2.9" width="4.2" height="4.2" rx="0.6"/><rect x="2" y="17.55" width="4.2" height="4.2" rx="0.6"/><rect x="17" y="17.55" width="4.2" height="4.2" rx="0.6"/><path d="M10.8 7.7h1.6l3.6 9.5h-1.55l-.85-2.4h-4l-.85 2.4H7.2zm-.75 5.9h3.1L11.6 9.3z"/></g></svg>
<svg class="abs" style="left:938px;top:14px" width="24" height="24" viewBox="0 0 24 24"><path d="M5.4 5.6L18.7 19" stroke="#5f6368" stroke-width="2.2" fill="none"/><circle cx="5.4" cy="5.6" r="2.6" fill="#5f6368"/><circle cx="18.7" cy="19" r="2.6" fill="#5f6368"/></svg>
<div class="caret" style="left:969px;top:24px"></div>
<svg class="abs" style="left:986px;top:14px" width="24" height="24" viewBox="0 0 24 24"><rect x="4.1" y="3.9" width="16.6" height="16.4" rx="1.8" fill="none" stroke="#5f6368" stroke-width="2"/></svg>
<div class="caret" style="left:1017.5px;top:24px"></div>
<div class="sep" style="left:1039px"></div>
<div class="tb" id="t_theme" style="left:1054px;top:19.2px;font-size:14.35px;letter-spacing:0.152px;">Theme and layout</div>
</div>

<div id="botfade" class="abs" style="left:51px;top:788px;width:1154px;height:41px;background:linear-gradient(to bottom,rgba(0,0,0,0),rgba(0,0,0,0.085));"></div>
<div id="panel" class="abs"></div>
<div id="pnc" class="abs" style="left:0;top:0;width:1536px;height:829px;">
<div class="t" id="p_title" style="left:1222px;top:68.1px;font-size:17.2px;letter-spacing:0.086px;color:#202124;-webkit-text-stroke:0.2px #202124;">Theme and Layout</div>
<svg class="abs" style="left:1498px;top:64px" width="24" height="24" viewBox="0 0 24 24"><path fill="#202124" d="M19 6.41L17.59 5 12 10.59 6.41 5 5 6.41 10.59 12 5 17.59 6.41 19 12 13.41 17.59 19 19 17.59 13.41 12z"/></svg>
<div class="abs" style="left:1206px;top:104px;width:330px;height:1px;background:#dadce0"></div>
<div class="t" id="p_theme" style="left:1266.2px;top:116.4px;font-size:13px;letter-spacing:-0.080px;color:#3367d6;-webkit-text-stroke:0.4px #3367d6;">THEME</div>
<div class="t" id="p_layout" style="left:1431.2px;top:116.4px;font-size:13px;letter-spacing:-0.192px;color:#5f6368;-webkit-text-stroke:0.4px #5f6368;">LAYOUT</div>
<div class="abs" style="left:1206px;top:142px;width:330px;height:1px;background:#dadce0"></div>
<div class="abs" style="left:1206px;top:141px;width:166px;height:2px;background:#3b6fe0"></div>
<div class="t" id="p_cur" style="left:1234.3px;top:170.9px;font-size:11.6px;letter-spacing:-0.138px;color:#80868b;">Current Theme</div>
<div class="t" id="p_cus" style="left:1234.3px;top:188.0px;font-size:11.4px;letter-spacing:-0.406px;color:#5f6368;font-weight:bold;">Custom</div>
<div class="abs" style="left:1397px;top:170px;width:122px;height:36px;border:1px solid #e3e5e8;border-radius:5px;"></div>
<div class="t" id="p_cust" style="left:1422.3px;top:182.1px;font-size:15.6px;letter-spacing:0.034px;color:#3367d6;-webkit-text-stroke:0.35px #3367d6;">Customize</div>
<div class="abs" style="left:1213px;top:229px;width:323px;height:1px;background:#dadce0"></div>
<svg class="abs" id="cards" style="left:1206px;top:240px" width="330" height="589" viewBox="1206 240 330 589"><rect x="1235.5" y="252" width="284.5" height="169" rx="9" fill="#fff" stroke="#5b86ee" stroke-width="2"/><rect x="1392" y="293.7" width="105" height="1" fill="#f1f1f1"/><rect x="1392" y="303.3" width="105" height="1" fill="#f1f1f1"/><rect x="1392" y="313.1" width="105" height="1" fill="#f1f1f1"/><rect x="1392" y="322.9" width="105" height="1" fill="#f1f1f1"/><rect x="1392" y="332.2" width="105" height="1" fill="#f1f1f1"/><rect x="1396.9" y="305.4" width="8.0" height="27.5" fill="#2a46a4"/><rect x="1404.9" y="298.2" width="7.9" height="34.7" fill="#4d68cc"/><rect x="1422.9" y="305.4" width="8.0" height="27.5" fill="#2a46a4"/><rect x="1430.9" y="298.2" width="8.2" height="34.7" fill="#4d68cc"/><rect x="1447.9" y="305.4" width="8.2" height="27.5" fill="#2a46a4"/><rect x="1456.1" y="298.2" width="8.5" height="34.7" fill="#4d68cc"/><rect x="1474.2" y="305.4" width="8.2" height="27.5" fill="#2a46a4"/><rect x="1482.4" y="298.2" width="8.5" height="34.7" fill="#4d68cc"/><rect x="1251" y="366.7" width="123" height="1" fill="#f3f3f3"/><rect x="1251" y="374.1" width="123" height="1" fill="#f3f3f3"/><rect x="1251" y="381.0" width="123" height="1" fill="#f3f3f3"/><rect x="1251" y="388.2" width="123" height="1" fill="#f3f3f3"/><rect x="1251" y="395.9" width="123" height="1" fill="#f3f3f3"/><rect x="1251" y="402.8" width="123" height="1" fill="#f3f3f3"/><path d="M1442.6,379.4 L1438.09,353.79 A26,26 0 1 1 1442.60,405.40 Z" fill="#2a46a4" stroke="#2a46a4" stroke-width="0.3"/><path d="M1442.6,379.4 L1442.60,405.40 A26,26 0 0 1 1434.14,403.98 Z" fill="#f3cdb9" stroke="#f3cdb9" stroke-width="0.3"/><path d="M1442.6,379.4 L1434.14,403.98 A26,26 0 0 1 1426.77,400.03 Z" fill="#c3cdf2" stroke="#c3cdf2" stroke-width="0.3"/><path d="M1442.6,379.4 L1426.77,400.03 A26,26 0 0 1 1418.41,388.93 Z" fill="#94a8ec" stroke="#94a8ec" stroke-width="0.3"/><path d="M1442.6,379.4 L1418.41,388.93 A26,26 0 0 1 1416.90,375.47 Z" fill="#7088e4" stroke="#7088e4" stroke-width="0.3"/><path d="M1442.6,379.4 L1416.90,375.47 A26,26 0 0 1 1438.09,353.79 Z" fill="#4d68cc" stroke="#4d68cc" stroke-width="0.3"/><path d="M1235.5,471 a9,9 0 0 1 9,-9 h265 a9,9 0 0 1 9,9 v8 h-283 z" fill="#e0e0e0"/><rect x="1235.5" y="462" width="283" height="168" rx="9" fill="none" stroke="#ececec" stroke-width="1"/><rect x="1391" y="502.9" width="105" height="1" fill="#e2e2e2"/><rect x="1391" y="512.5" width="105" height="1" fill="#e2e2e2"/><rect x="1391" y="522.0" width="105" height="1" fill="#e2e2e2"/><rect x="1391" y="531.9" width="105" height="1" fill="#e2e2e2"/><rect x="1391" y="541.1" width="105" height="1" fill="#e2e2e2"/><rect x="1395.9" y="514.6" width="8.5" height="27.2" fill="#3370e6"/><rect x="1404.4" y="507.4" width="7.9" height="34.4" fill="#4eb1c9"/><rect x="1421.9" y="514.6" width="8.7" height="27.2" fill="#3370e6"/><rect x="1430.6" y="507.4" width="8.0" height="34.4" fill="#4eb1c9"/><rect x="1447" y="514.6" width="8.6" height="27.2" fill="#3370e6"/><rect x="1455.6" y="507.4" width="8.4" height="34.4" fill="#4eb1c9"/><rect x="1473" y="514.6" width="8.8" height="27.2" fill="#3370e6"/><rect x="1481.8" y="507.4" width="8.2" height="34.4" fill="#4eb1c9"/><rect x="1250" y="560" width="123" height="8.7" fill="#e0e0e0"/><rect x="1250" y="575.9" width="123" height="1" fill="#e4e4e4"/><rect x="1250" y="583.1" width="123" height="1" fill="#e4e4e4"/><rect x="1250" y="590.0" width="123" height="1" fill="#e4e4e4"/><rect x="1250" y="597.1" width="123" height="1" fill="#e4e4e4"/><rect x="1250" y="604.8" width="123" height="1" fill="#e4e4e4"/><rect x="1250" y="612.3" width="123" height="1" fill="#e4e4e4"/><path d="M1441.8,588.9 L1437.46,562.96 A26.3,26.3 0 1 1 1441.80,615.20 Z" fill="#3370e6" stroke="#3370e6" stroke-width="0.3"/><path d="M1441.8,588.9 L1441.80,615.20 A26.3,26.3 0 0 1 1433.24,613.77 Z" fill="#7fae5f" stroke="#7fae5f" stroke-width="0.3"/><path d="M1441.8,588.9 L1433.24,613.77 A26.3,26.3 0 0 1 1424.20,608.44 Z" fill="#ec9a3a" stroke="#ec9a3a" stroke-width="0.3"/><path d="M1441.8,588.9 L1424.20,608.44 A26.3,26.3 0 0 1 1417.09,597.90 Z" fill="#e17a2b" stroke="#e17a2b" stroke-width="0.3"/><path d="M1441.8,588.9 L1417.09,597.90 A26.3,26.3 0 0 1 1415.90,584.33 Z" fill="#e0359a" stroke="#e0359a" stroke-width="0.3"/><path d="M1441.8,588.9 L1415.90,584.33 A26.3,26.3 0 0 1 1437.46,562.96 Z" fill="#4eb1c9" stroke="#4eb1c9" stroke-width="0.3"/><path d="M1235.5,776 v-97 a9,9 0 0 1 9,-9 h265 a9,9 0 0 1 9,9 v97 z" fill="#ecedef"/><path d="M1235.5,686.7 v-7.7 a9,9 0 0 1 9,-9 h265 a9,9 0 0 1 9,9 v7.7 z" fill="#2d3136"/><rect x="1381.2" y="699.7" width="122.7" height="58.1" fill="#fff"/><rect x="1391" y="710.8" width="105" height="1" fill="#e6e6e6"/><rect x="1391" y="720.6" width="105" height="1" fill="#e6e6e6"/><rect x="1391" y="730.0" width="105" height="1" fill="#e6e6e6"/><rect x="1391" y="739.8" width="105" height="1" fill="#e6e6e6"/><rect x="1391" y="749.1" width="105" height="1" fill="#e6e6e6"/><rect x="1396" y="722.5" width="8.5" height="27.3" fill="#3370e6"/><rect x="1404.5" y="715" width="7.9" height="34.8" fill="#4eb1c9"/><rect x="1422.2" y="722.5" width="8.5" height="27.3" fill="#3370e6"/><rect x="1430.7" y="715" width="8.0" height="34.8" fill="#4eb1c9"/><rect x="1447.1" y="722.5" width="8.4" height="27.3" fill="#3370e6"/><rect x="1455.5" y="715" width="8.5" height="34.8" fill="#4eb1c9"/><rect x="1473.1" y="722.5" width="8.6" height="27.3" fill="#3370e6"/><rect x="1481.7" y="715" width="8.5" height="34.8" fill="#4eb1c9"/><rect x="1250.1" y="767.9" width="123" height="8.1" fill="#2d3136"/><rect x="1381.2" y="767.2" width="122.7" height="8.8" fill="#fff"/><clipPath id="cp3"><rect x="1381" y="767" width="123" height="9"/></clipPath><g clip-path="url(#cp3)"><path d="M1442,796.7 L1437.66,770.76 A26.3,26.3 0 1 1 1442.00,823.00 Z" fill="#3370e6" stroke="#3370e6" stroke-width="0.3"/><path d="M1442,796.7 L1442.00,823.00 A26.3,26.3 0 0 1 1416.10,792.13 Z" fill="#3370e6" stroke="#3370e6" stroke-width="0.3"/><path d="M1442,796.7 L1416.10,792.13 A26.3,26.3 0 0 1 1437.66,770.76 Z" fill="#4eb1c9" stroke="#4eb1c9" stroke-width="0.3"/></g></svg>
<div class="t" id="c1_l" style="left:1257.4px;top:289.7px;font-size:9.4px;letter-spacing:-0.015px;font-weight:bold;color:#202124;">Custom</div>
<div class="t" id="c1_t" style="left:1256.3px;top:309.6px;font-size:27.6px;letter-spacing:0.146px;color:#202124;">Text</div>
<div class="t" id="c1_n" style="left:1234.6px;top:428.7px;font-size:11.2px;letter-spacing:-0.365px;font-weight:bold;color:#757575;">Custom</div>
<div class="t" id="c2_l" style="left:1256.6px;top:498.2px;font-size:10.8px;letter-spacing:-0.001px;font-weight:bold;color:#202124;">Default</div>
<div class="t" id="c2_t" style="left:1255.3px;top:516.3px;font-size:30.6px;letter-spacing:0.720px;color:#202124;">Text</div>
<div class="t" id="c2_n" style="left:1234.6px;top:636.5px;font-size:11.2px;letter-spacing:-0.080px;font-weight:bold;color:#757575;">Default</div>
<div class="t" id="c3_l" style="left:1256.8px;top:705.5px;font-size:12px;letter-spacing:0.190px;font-weight:bold;color:#202124;">Edge</div>
<div class="t" id="c3_t" style="left:1256.3px;top:723.3px;font-size:30.6px;transform-origin:0 50%;transform:scaleX(1.1137);color:#555;">Text</div>
<div class="abs" style="left:1206px;top:776px;width:330px;height:53px;background:#fff"></div>
<div class="abs" style="left:1241px;top:786px;width:264px;height:35px;border:1px solid #e3e5e8;border-radius:4px;background:#fff"></div>
<div class="abs" style="left:1237px;top:783px;width:248px;height:31px;border:5px solid #e30613;border-radius:3px;"></div>
<div class="t" id="p_ext" style="left:1281.8px;top:796.6px;font-size:15.8px;letter-spacing:0.017px;color:#3367d6;-webkit-text-stroke:0.35px #3367d6;">Extract theme from image</div>
</div>

</body>
</html>
